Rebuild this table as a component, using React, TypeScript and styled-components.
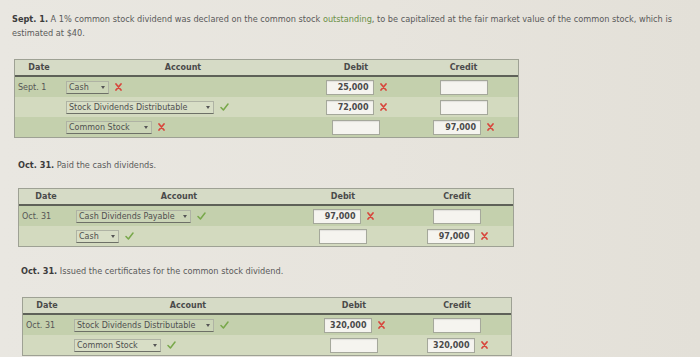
import styled, { createGlobalStyle } from "styled-components";

const GlobalStyle = createGlobalStyle`
  html, body {
    margin: 0;
    padding: 0;
  }
  body {
    background: #e7e4dd;
    font-family: "DejaVu Sans", Verdana, sans-serif;
    color: #555;
  }
`;

const Page = styled.div`
  width: 700px;
  height: 357px;
  overflow: hidden;
  box-sizing: border-box;
  padding-top: 12px;
  background: linear-gradient(90deg, #e9e7e1 0%, #e7e4dd 55%, #e3e0d8 100%);
`;

const Prompt = styled.p<{ $left: number; $gap: number }>`
  margin: ${(p) => p.$gap}px 0 0 ${(p) => p.$left}px;
  width: 680px;
  font-size: 8.2px;
  line-height: 14px;
  color: #5a5a5a;
`;

const Lead = styled.b`
  color: #3c3c3c;
`;

const Hint = styled.span`
  color: #6b9148;
`;

const Journal = styled.div<{ $left: number; $gap: number; $width: number; $cols: string }>`
  --cols: ${(p) => p.$cols};
  margin: ${(p) => p.$gap}px 0 0 ${(p) => p.$left}px;
  width: ${(p) => p.$width}px;
  box-sizing: border-box;
  border: 1px solid #9ea194;
`;

const HeadRow = styled.div`
  display: grid;
  grid-template-columns: var(--cols);
  align-items: center;
  height: 15px;
  background: #d6dbc6;
  border-bottom: 2px solid #5e6158;
  font-size: 8px;
  font-weight: bold;
  color: #4a4a4a;
  text-align: center;
`;

const Row = styled.div<{ $dark?: boolean }>`
  display: grid;
  grid-template-columns: var(--cols);
  align-items: center;
  height: 20px;
  background: ${(p) => (p.$dark ? "#c4d0ad" : "#d3dabf")};
`;

const DateCell = styled.div`
  padding-left: 3px;
  font-size: 8px;
  color: #555;
`;

const AccountCell = styled.div`
  display: flex;
  align-items: center;
  gap: 6px;
  padding-left: 3px;
`;

const AmountCell = styled.div`
  display: flex;
  align-items: center;
  justify-content: center;
  gap: 6px;
`;

const Select = styled.div<{ $w: number }>`
  width: ${(p) => p.$w}px;
  height: 13px;
  box-sizing: border-box;
  display: flex;
  align-items: center;
  justify-content: space-between;
  padding: 0 3px 0 2px;
  border: 1px solid #afb3a4;
  border-bottom-color: #6d7067;
  background: rgba(255, 255, 255, 0.12);
  font-size: 8px;
  color: #4f4f4f;
  white-space: nowrap;
`;

const Caret = styled.span`
  width: 0;
  height: 0;
  border-left: 2px solid transparent;
  border-right: 2px solid transparent;
  border-top: 3px solid #555;
`;

const Amount = styled.div`
  width: 48px;
  height: 15px;
  box-sizing: border-box;
  padding-right: 4px;
  border: 1px solid #a5a89b;
  background: #f5f4ef;
  box-shadow: inset 0 1px 1px rgba(0, 0, 0, 0.08);
  font-size: 8px;
  font-weight: bold;
  line-height: 13px;
  text-align: right;
  color: #4a4a4a;
`;

const Wrong = () => (
  <svg width="7" height="8" viewBox="0 0 7 8">
    <path d="M1 1 L6 7 M6 1 L1 7" stroke="#d8473d" strokeWidth="1.7" strokeLinecap="round" />
  </svg>
);

const Right = () => (
  <svg width="9" height="8" viewBox="0 0 9 8">
    <path d="M1 4.5 L3.4 7 L8 1" fill="none" stroke="#78a84a" strokeWidth="1.5" strokeLinecap="round" strokeLinejoin="round" />
  </svg>
);

type Mark = "x" | "ok" | undefined;

const MarkIcon = ({ m }: { m: Mark }) => (m === "x" ? <Wrong /> : m === "ok" ? <Right /> : null);

type Line = {
  date?: string;
  account: string;
  w: number;
  acctMark: Mark;
  debit?: string;
  debitMark?: Mark;
  credit?: string;
  creditMark?: Mark;
};

const Entry = ({ left, gap, width, cols, lines }: { left: number; gap: number; width: number; cols: string; lines: Line[] }) => (
  <Journal $left={left} $gap={gap} $width={width} $cols={cols}>
    <HeadRow>
      <div>Date</div>
      <div>Account</div>
      <div>Debit</div>
      <div>Credit</div>
    </HeadRow>
    {lines.map((l, i) => (
      <Row key={i} $dark={i % 2 === 0}>
        <DateCell>{l.date}</DateCell>
        <AccountCell>
          <Select $w={l.w}>
            {l.account}
            <Caret />
          </Select>
          <MarkIcon m={l.acctMark} />
        </AccountCell>
        <AmountCell>
          <Amount>{l.debit}</Amount>
          <MarkIcon m={l.debitMark} />
        </AmountCell>
        <AmountCell>
          <Amount>{l.credit}</Amount>
          <MarkIcon m={l.creditMark} />
        </AmountCell>
      </Row>
    ))}
  </Journal>
);

export default function App() {
  return (
    <>
      <GlobalStyle />
      <Page>
        <Prompt $left={12} $gap={0}>
          <Lead>Sept. 1.</Lead> A 1% common stock dividend was declared on the common stock <Hint>outstanding</Hint>, to be
          capitalized at the fair market value of the common stock, which is
          <br />
          estimated at $40.
        </Prompt>

        <Entry
          left={14}
          gap={19}
          width={505}
          cols="48px 240px 106px 1fr"
          lines={[
            { date: "Sept. 1", account: "Cash", w: 43, acctMark: "x", debit: "25,000", debitMark: "x" },
            { account: "Stock Dividends Distributable", w: 148, acctMark: "ok", debit: "72,000", debitMark: "x" },
            { account: "Common Stock", w: 86, acctMark: "x", credit: "97,000", creditMark: "x" },
          ]}
        />

        <Prompt $left={18} $gap={20}>
          <Lead>Oct. 31.</Lead> Paid the cash dividends.
        </Prompt>

        <Entry
          left={18}
          gap={16}
          width={496}
          cols="54px 212px 116px 1fr"
          lines={[
            { date: "Oct. 31", account: "Cash Dividends Payable", w: 115, acctMark: "ok", debit: "97,000", debitMark: "x" },
            { account: "Cash", w: 43, acctMark: "ok", credit: "97,000", creditMark: "x" },
          ]}
        />

        <Prompt $left={21} $gap={17}>
          <Lead>Oct. 31.</Lead> Issued the certificates for the common stock dividend.
        </Prompt>

        <Entry
          left={22}
          gap={19}
          width={490}
          cols="48px 234px 98px 1fr"
          lines={[
            { date: "Oct. 31", account: "Stock Dividends Distributable", w: 140, acctMark: "ok", debit: "320,000", debitMark: "x" },
            { account: "Common Stock", w: 87, acctMark: "ok", credit: "320,000", creditMark: "x" },
          ]}
        />
      </Page>
    </>
  );
}
